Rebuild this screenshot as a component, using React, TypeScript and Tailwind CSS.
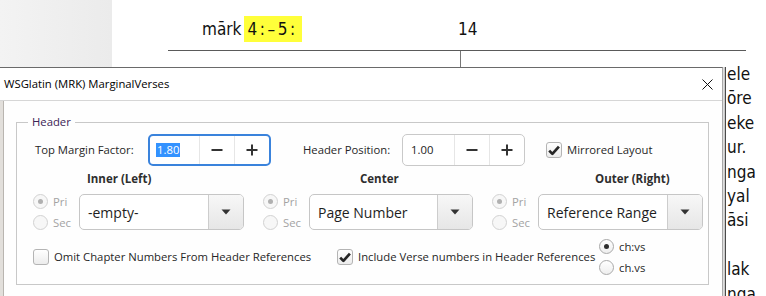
import React from "react";

const ui = { fontFamily: '"Open Sans", "Noto Sans", sans-serif' };
const pageFont = { fontFamily: '"DejaVu Sans Condensed", "DejaVu Sans", sans-serif', fontStretch: "semi-condensed" as const };

function Minus() {
  return (
    <svg width="12" height="12" viewBox="0 0 12 12">
      <rect x="0.5" y="5" width="11" height="2" fill="#333" />
    </svg>
  );
}
function Plus() {
  return (
    <svg width="12" height="12" viewBox="0 0 12 12">
      <rect x="0.5" y="5" width="11" height="2" fill="#333" />
      <rect x="5" y="0.5" width="2" height="11" fill="#333" />
    </svg>
  );
}

function Spinner({ focused, value }: { focused?: boolean; value: string }) {
  return (
    <div
      className={
        "flex h-[32px] w-[123px] rounded-[5px] bg-white " +
        (focused ? "border-2 border-[#3a83dc]" : "border border-[#c9c9c9]")
      }
    >
      <div className={"flex flex-1 items-center text-[11.3px] text-[#222] " + (focused ? "pl-[6px]" : "pl-[8px]")}>
        {focused ? <span className="bg-[#3392ff] px-[1px] leading-[14px] text-white">{value}</span> : value}
      </div>
      <div className="flex w-[35px] items-center justify-center border-l border-[#e6e6e6]">
        <Minus />
      </div>
      <div className="flex w-[35px] items-center justify-center border-l border-[#e6e6e6]">
        <Plus />
      </div>
    </div>
  );
}

function Check({ checked }: { checked?: boolean }) {
  return (
    <div className="flex h-[16px] w-[16px] shrink-0 items-center justify-center rounded-[3px] border border-[#b4b4b4] bg-gradient-to-b from-[#ffffff] to-[#ececec]">
      {checked && (
        <svg width="12" height="11" viewBox="0 0 12 11">
          <path d="M1.2 5.6 L4.4 8.9 L10.9 1.6" fill="none" stroke="#262626" strokeWidth="2.7" strokeLinejoin="round" />
        </svg>
      )}
    </div>
  );
}

function Radio({ selected, disabled }: { selected?: boolean; disabled?: boolean }) {
  return (
    <div
      className={
        "flex h-[15px] w-[15px] shrink-0 items-center justify-center rounded-full border " +
        (disabled ? "border-[#d2d2d2] bg-[#f7f7f7]" : "border-[#a9a9a9] bg-gradient-to-b from-[#ffffff] to-[#eeeeee]")
      }
    >
      {selected && <div className={"h-[5px] w-[5px] rounded-full " + (disabled ? "bg-[#b0b0b0]" : "bg-[#2e2e2e]")} />}
    </div>
  );
}

function PriSec() {
  return (
    <div className="flex h-[36px] w-[46px] shrink-0 flex-col justify-between text-[11.3px] text-[#a3a3a3]">
      <div className="flex items-center gap-[5px] leading-[14px]">
        <Radio selected disabled />
        <span>Pri</span>
      </div>
      <div className="flex items-center gap-[5px] leading-[14px]">
        <Radio disabled />
        <span>Sec</span>
      </div>
    </div>
  );
}

function Combo({ text, w }: { text: string; w: string }) {
  return (
    <div className={"flex h-[36px] rounded-[5px] border border-[#c6c6c6] bg-white " + w}>
      <div className="flex flex-1 items-center pl-[8px] text-[14px] text-[#1e1e1e]">{text}</div>
      <div className="flex w-[35px] items-center justify-center rounded-r-[4px] border-l border-[#cdcdcd] bg-gradient-to-b from-[#f7f7f7] to-[#e6e6e6]">
        <svg width="10" height="6" viewBox="0 0 10 6">
          <path d="M0.5 0.5 L9.5 0.5 L5 5.5 Z" fill="#333" />
        </svg>
      </div>
    </div>
  );
}

export default function App() {
  const words = ["ele", "ōre", "eke", "ur.", "nga", "yal", "āsi", "\u00a0", "lak", "nga"];
  return (
    <div className="relative flex h-[296px] w-[766px] overflow-hidden bg-white">
      {/* background document */}
      <div className="h-full w-[112px] shrink-0 bg-gradient-to-r from-[#f3f3f3] to-[#ebebeb]" />
      <div className="min-w-0 flex-1 pl-[56px]" style={pageFont}>
        <div className="flex w-[578px] flex-col">
          <div className="flex h-[51px] border-b border-[#5a5a5a] pt-[16px] text-[17px] text-[#111]">
            <div className="flex w-[290px] shrink-0 items-start pl-[34px]">
              <span className="leading-[26px]">mārk</span>
              <span className="ml-[3px] bg-[#ffff3a] pl-[3px] pr-[4px] leading-[26px] tracking-[2.6px]">4:–5:</span>
            </div>
            <span className="leading-[26px]">14</span>
          </div>
          <div className="flex h-[250px]">
            <div className="h-full w-[293px] shrink-0 border-r border-[#777]" />
            <div className="flex shrink-0 flex-col pl-[266px] pt-[11px] text-[17px] leading-[24.4px] text-[#111]">
              {words.map((w, i) => (
                <span key={i}>{w}</span>
              ))}
            </div>
          </div>
        </div>
      </div>

      {/* dialog window */}
      <div
        className="absolute left-0 top-[67px] flex h-[240px] w-[723px] flex-col border-r border-t border-r-[#a8a8a8] border-t-[#6a6a6a] bg-white shadow-[1px_0_0_#dedede,2px_0_0_#c9c9c9,3px_0_0_#4a4a4a]"
        style={ui}
      >
        <div className="flex h-[32px] shrink-0 items-center justify-between pl-[4px] pr-[9px] text-[11.3px] text-black">
          <span>WSGlatin (MRK) MarginalVerses</span>
          <svg width="11" height="11" viewBox="0 0 11 11">
            <path d="M0.5 0.5 L10.5 10.5 M10.5 0.5 L0.5 10.5" stroke="#111" strokeWidth="1" />
          </svg>
        </div>
        <div className="flex flex-1 border-t border-[#d6d6d6]">
          <div className="w-[4px] shrink-0 border-r border-[#b9b5b0] bg-[#e2dfdb]" />
          <div className="flex-1 bg-[#fefefe] pl-[12px] pr-[13px] pt-[21px]">
            <div className="relative border border-[#c8c8c8] pb-[8px] pt-[11px]">
              <span className="absolute left-[11px] top-[-9px] bg-[#fefefe] px-[4px] text-[11.3px] leading-[16px] text-[#3b2456]">
                Header
              </span>
              {/* row 1 */}
              <div className="flex h-[32px] items-center text-[11.3px] text-[#262626]">
                <span className="w-[131px] pl-[18px]">Top Margin Factor:</span>
                <Spinner focused value="1.80" />
                <span className="ml-[32px] w-[99px]">Header Position:</span>
                <Spinner value="1.00" />
                <div className="ml-[21px] flex items-center gap-[5px]">
                  <Check checked />
                  <span>Mirrored Layout</span>
                </div>
              </div>
              {/* headings */}
              <div className="mt-[5px] flex h-[16px] items-center text-[11.5px] font-bold text-[#2e2e2e]">
                <span className="w-[343px] pl-[70px]">Inner (Left)</span>
                <span className="w-[235px]">Center</span>
                <span>Outer (Right)</span>
              </div>
              {/* row 3 */}
              <div className="mt-[7px] flex items-center">
                <div className="ml-[16px]">
                  <PriSec />
                </div>
                <Combo text="-empty-" w="w-[165px]" />
                <div className="ml-[19px]">
                  <PriSec />
                </div>
                <Combo text="Page Number" w="w-[164px]" />
                <div className="ml-[19px]">
                  <PriSec />
                </div>
                <Combo text="Reference Range" w="w-[165px]" />
              </div>
              {/* row 4 */}
              <div className="mt-[8px] flex h-[38px] items-center text-[11.3px] text-[#262626]">
                <div className="ml-[16px] flex w-[304px] shrink-0 items-center gap-[5px]">
                  <Check />
                  <span>Omit Chapter Numbers From Header References</span>
                </div>
                <div className="flex w-[262px] shrink-0 items-center gap-[5px]">
                  <Check checked />
                  <span>Include Verse numbers in Header References</span>
                </div>
                <div className="flex flex-col gap-[6px]">
                  <div className="flex items-center gap-[5px] leading-[15px]">
                    <Radio selected />
                    <span>ch:vs</span>
                  </div>
                  <div className="flex items-center gap-[5px] leading-[15px]">
                    <Radio />
                    <span>ch.vs</span>
                  </div>
                </div>
              </div>
            </div>
          </div>
        </div>
      </div>
    </div>
  );
}
